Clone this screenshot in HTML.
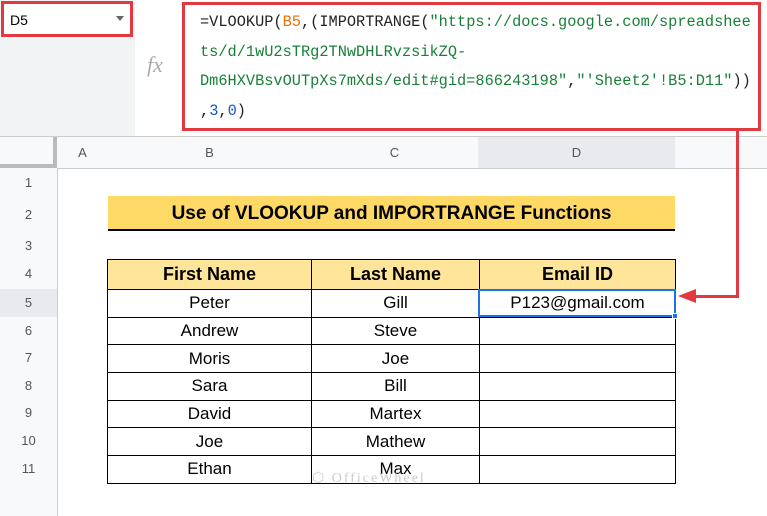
<!DOCTYPE html>
<html><head><style>
body{margin:0;width:767px;height:516px;position:relative;overflow:hidden;background:#fff;font-family:"Liberation Sans",Arial,sans-serif}
.a{position:absolute;box-sizing:border-box}
.f{font-family:"Liberation Mono",monospace;font-size:15.3px;color:#222;white-space:pre}
.g{color:#188038}.o{color:#e8710a}.b{color:#1155cc}
.rh{position:absolute;left:0;width:57px;text-align:center;color:#555;font-size:13px;border-bottom:1px solid #ddd;background:#f8f9fa;border-right:1px solid #ccc}
.ch{position:absolute;top:137px;height:31px;line-height:31px;text-align:center;color:#555;font-size:13px;border-right:1px solid #ccc;background:#f8f9fa;border-bottom:1px solid #ccc}
td{border:1px solid #000;text-align:center;font-size:17px;height:26.7px;padding:0}
</style></head><body>
<div class="a" style="left:0;top:0;width:135px;height:136px;background:#f1f3f4"></div>
<div class="a" style="left:1px;top:1px;width:132px;height:36px;border:3px solid #e2383f;background:#fff;font-size:14px;padding:8px 0 0 6px">D5</div>
<div class="a" style="left:116px;top:16px;width:0;height:0;border-left:4px solid transparent;border-right:4px solid transparent;border-top:5px solid #666"></div>
<div class="a" style="left:147px;top:52px;font-family:'Liberation Serif',serif;font-style:italic;font-size:22px;color:#aaa">fx</div>
<div class="a" style="left:182px;top:2px;width:579px;height:129px;border:3px solid #e2383f"></div>
<div class="a f" style="left:200px;top:8px;line-height:29.5px">=VLOOKUP(<span class="o">B5</span>,(IMPORTRANGE(<span class="g">"https://docs.google.com/spreadshee
ts/d/1wU2sTRg2TNwDHLRvzsikZQ-
Dm6HXVBsvOUTpXs7mXds/edit#gid=866243198"</span>,<span class="g">"'Sheet2'!B5:D11"</span>))
,<span class="b">3</span>,<span class="b">0</span>)</div>
<div class="a" style="left:0;top:136px;width:767px;height:1px;background:#ccc"></div>
<div class="a" style="left:0;top:137px;width:57px;height:31px;background:#f8f9fa;border-right:4px solid #bbb;border-bottom:4px solid #bbb"></div>
<div class="ch" style="left:57px;width:51px">A</div>
<div class="ch" style="left:108px;width:203px">B</div>
<div class="ch" style="left:311px;width:167px">C</div>
<div class="ch" style="left:478px;width:197px;background:#e8eaed">D</div>
<div class="ch" style="left:675px;width:92px"></div>
<div class="rh" style="top:168px;height:29px;line-height:29px">1</div>
<div class="rh" style="top:197px;height:35px;line-height:35px">2</div>
<div class="rh" style="top:232px;height:27px;line-height:27px">3</div>
<div class="rh" style="top:259px;height:30px;line-height:30px">4</div>
<div class="rh" style="top:289px;height:27.6px;line-height:27px;background:#e8eaed">5</div>
<div class="rh" style="top:316.6px;height:27.6px;line-height:27px">6</div>
<div class="rh" style="top:344.2px;height:27.6px;line-height:27px">7</div>
<div class="rh" style="top:371.8px;height:27.6px;line-height:27px">8</div>
<div class="rh" style="top:399.4px;height:27.6px;line-height:27px">9</div>
<div class="rh" style="top:427px;height:27.6px;line-height:27px">10</div>
<div class="rh" style="top:454.6px;height:27.6px;line-height:27px">11</div>
<div class="rh" style="top:482px;height:34px;border-bottom:none"></div>
<div class="a" style="left:108px;top:196px;width:567px;height:35px;background:#ffd966;border-bottom:2px solid #000;text-align:center;font-weight:bold;font-size:19px;line-height:36px">Use of VLOOKUP and IMPORTRANGE Functions</div>
<table class="a" style="left:107px;top:259px;width:569px;border-collapse:collapse">
<tr style="background:#ffe599;font-weight:bold"><td style="width:203px;height:29px;font-size:18px">First Name</td><td style="width:167px;font-size:18px">Last Name</td><td style="font-size:18px">Email ID</td></tr>
<tr><td>Peter</td><td>Gill</td><td>P123@gmail.com</td></tr>
<tr><td>Andrew</td><td>Steve</td><td></td></tr>
<tr><td>Moris</td><td>Joe</td><td></td></tr>
<tr><td>Sara</td><td>Bill</td><td></td></tr>
<tr><td>David</td><td>Martex</td><td></td></tr>
<tr><td>Joe</td><td>Mathew</td><td></td></tr>
<tr><td>Ethan</td><td>Max</td><td></td></tr>
</table>
<div class="a" style="left:478px;top:289px;width:198px;height:28px;border:2px solid #1a73e8"></div>
<div class="a" style="left:672px;top:313px;width:6px;height:6px;background:#1a73e8;border:1px solid #fff"></div>
<div class="a" style="left:736px;top:131px;width:3px;height:167px;background:#e2383f"></div>
<div class="a" style="left:695px;top:295px;width:44px;height:3px;background:#e2383f"></div>
<div class="a" style="left:678px;top:289px;width:0;height:0;border-top:7px solid transparent;border-bottom:7px solid transparent;border-right:18px solid #e2383f"></div>
<div class="a" style="left:312px;top:470px;font-family:'Liberation Serif',serif;font-size:14px;color:#aaa;letter-spacing:2px;opacity:.6">⬡ OfficeWheel</div>
</body></html>
